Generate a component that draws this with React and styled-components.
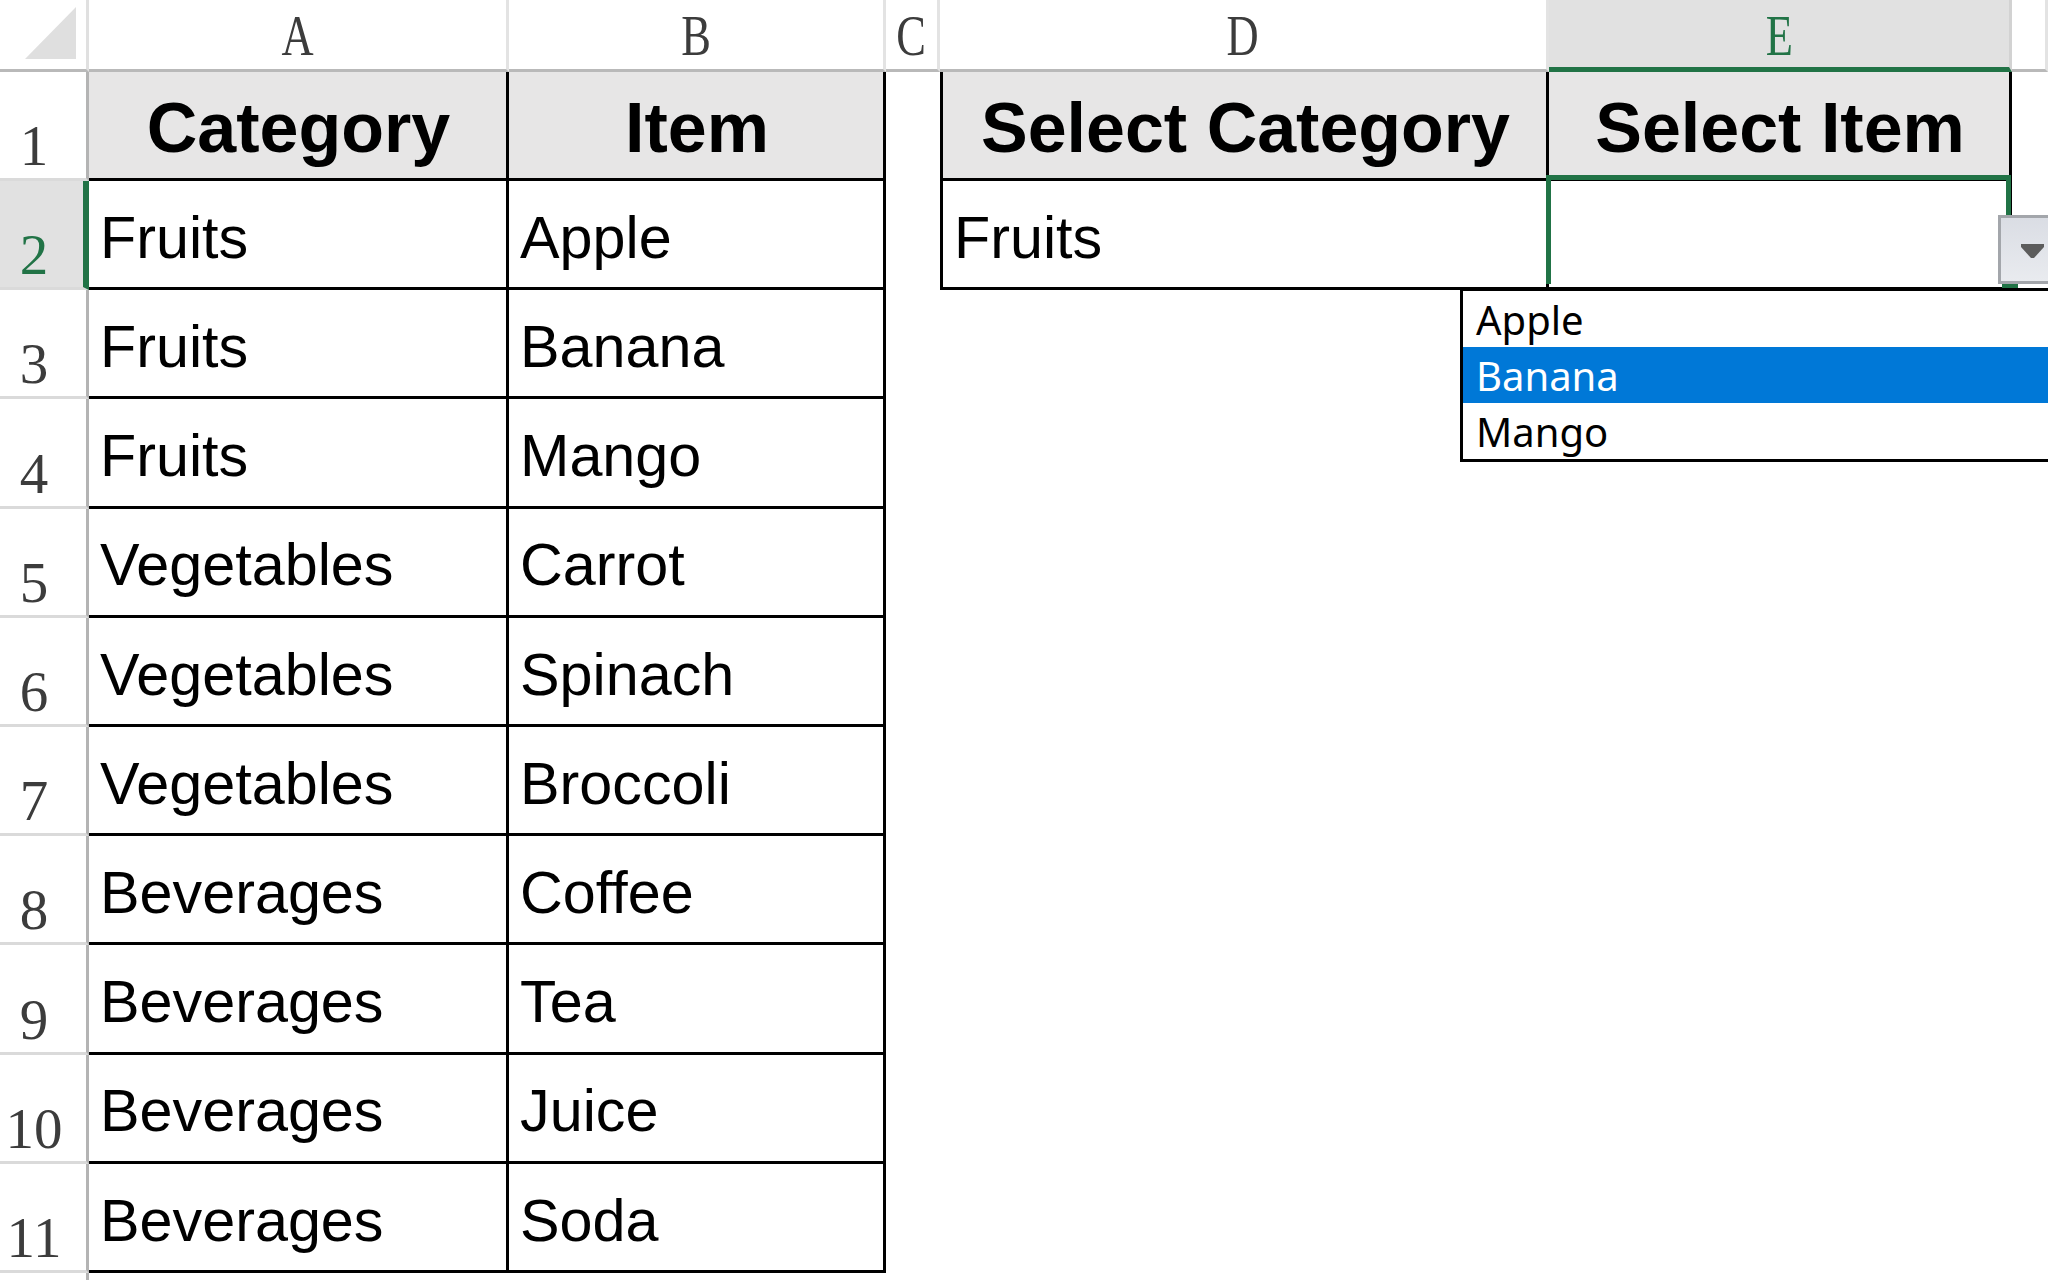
import styled, { createGlobalStyle } from 'styled-components';

const GlobalStyle = createGlobalStyle`
  html, body {
    margin: 0;
    padding: 0;
    background: #fff;
  }
  body {
    overflow: hidden;
  }
`;

const Sheet = styled.div`
  display: grid;
  grid-template-columns: 89px 420px 377px 54px 609px 463px 1fr;
  grid-template-rows: 72px 109px repeat(10, 109.2px) 1fr;
  width: 2048px;
  height: 1280px;
  overflow: hidden;
  background: #fff;
`;

const Corner = styled.div`
  display: flex;
  align-items: flex-end;
  justify-content: flex-end;
  padding: 0 10px 10px 0;
  box-sizing: border-box;
  border-right: 3px solid #e0e0e0;
  border-bottom: 3px solid #b9b9b9;
`;

const CornerMark = styled.div`
  width: 51px;
  height: 52px;
  background: #dfdfdf;
  clip-path: polygon(100% 0, 100% 100%, 0 100%);
`;

const ColHeader = styled.div`
  display: flex;
  align-items: flex-end;
  justify-content: center;
  box-sizing: border-box;
  padding-bottom: ${({ $active }) => ($active ? '3px' : '5px')};
  background: ${({ $active }) => ($active ? '#e1e1e1' : '#fff')};
  border-right: 3px solid ${({ $active }) => ($active ? '#d2d2d2' : '#e3e3e3')};
  border-bottom: ${({ $active }) => ($active ? '5px solid #217346' : '3px solid #b9b9b9')};
  font-family: "Liberation Serif", "Times New Roman", serif;
  font-size: 57px;
  line-height: 1;
  color: ${({ $active }) => ($active ? '#217346' : '#3c3c3c')};
`;

const Letter = styled.span`
  display: inline-block;
  transform: scaleX(0.78);
`;

const RowHeader = styled.div`
  display: flex;
  align-items: flex-end;
  justify-content: center;
  box-sizing: border-box;
  padding: 0 ${({ $active }) => ($active ? '15px' : '18px')} 4px 0;
  background: ${({ $active }) => ($active ? '#e1e1e1' : '#fff')};
  border-right: ${({ $active }) => ($active ? '6px solid #217346' : '3px solid #b4b4b4')};
  border-bottom: ${({ $last }) => ($last ? '0' : '3px solid #dadada')};
  font-family: "Liberation Serif", "Times New Roman", serif;
  font-size: 57px;
  line-height: 1;
  color: ${({ $active }) => ($active ? '#217346' : '#3c3c3c')};
`;

const Cell = styled.div`
  position: relative;
  display: flex;
  align-items: flex-end;
  justify-content: ${({ $head }) => ($head ? 'center' : 'flex-start')};
  box-sizing: border-box;
  padding: 0 9px ${({ $head }) => ($head ? '15px' : '20px')} 11px;
  background: ${({ $head }) => ($head ? '#e7e6e6' : '#fff')};
  border-right: 3px solid #000;
  border-bottom: 3px solid #000;
  border-left: ${({ $edge }) => ($edge ? '3px solid #000' : '0')};
  font-family: "Liberation Sans", Arial, sans-serif;
  font-size: ${({ $head }) => ($head ? '70px' : '59.3px')};
  font-weight: ${({ $head }) => ($head ? 700 : 400)};
  line-height: 1;
  color: #000;
  white-space: nowrap;
`;

const Blank = styled.div`
  background: #fff;
`;

const SelectFrame = styled.div`
  position: absolute;
  top: -6px;
  left: -3px;
  right: -2px;
  bottom: 3px;
  border: 5px solid #217346;
  border-bottom: 0;
  z-index: 1;
  pointer-events: none;
`;

const FillHandle = styled.div`
  position: absolute;
  left: 453px;
  top: 103px;
  width: 16px;
  height: 6px;
  background: #217346;
  z-index: 1;
`;

const DropButton = styled.div`
  position: absolute;
  left: 449px;
  top: 34px;
  width: 69px;
  height: 69px;
  box-sizing: border-box;
  display: flex;
  align-items: center;
  justify-content: center;
  padding-top: 3px;
  border: 3px solid #a3a6ab;
  background: linear-gradient(#dadde4, #e9ebef);
  z-index: 2;
`;

const ListBox = styled.div`
  position: absolute;
  left: -89px;
  top: 107px;
  width: 700px;
  border: 3px solid #000;
  background: #fff;
  z-index: 3;
`;

const ListItem = styled.div`
  height: 56px;
  padding-left: 13px;
  font-family: "Noto Sans", "Open Sans", sans-serif;
  font-size: 40px;
  line-height: 58px;
  overflow: hidden;
  background: ${({ $selected }) => ($selected ? '#0078d7' : '#fff')};
  color: ${({ $selected }) => ($selected ? '#fff' : '#000')};
`;

const columns = ['A', 'B', 'C', 'D', 'E'];

const rows = [
  ['Category', 'Item'],
  ['Fruits', 'Apple'],
  ['Fruits', 'Banana'],
  ['Fruits', 'Mango'],
  ['Vegetables', 'Carrot'],
  ['Vegetables', 'Spinach'],
  ['Vegetables', 'Broccoli'],
  ['Beverages', 'Coffee'],
  ['Beverages', 'Tea'],
  ['Beverages', 'Juice'],
  ['Beverages', 'Soda'],
];

const options = ['Apple', 'Banana', 'Mango'];

const ArrowIcon = () => (
  <svg width="23" height="15" viewBox="0 0 23 15">
    <polygon points="0,0 23,0 23,3 13,14 10,14 0,3" fill="#5c5c5c" />
  </svg>
);

const PickerCell = () => (
  <Cell>
    <SelectFrame />
    <FillHandle />
    <DropButton>
      <ArrowIcon />
    </DropButton>
    <ListBox>
      {options.map((option) => (
        <ListItem key={option} $selected={option === 'Banana'}>
          {option}
        </ListItem>
      ))}
    </ListBox>
  </Cell>
);

const LookupCells = ({ index }) => {
  if (index === 0) {
    return (
      <>
        <Cell $head $edge>Select Category</Cell>
        <Cell $head>Select Item</Cell>
      </>
    );
  }
  if (index === 1) {
    return (
      <>
        <Cell $edge>Fruits</Cell>
        <PickerCell />
      </>
    );
  }
  return (
    <>
      <Blank />
      <Blank />
    </>
  );
};

export default function App() {
  return (
    <>
      <GlobalStyle />
      <Sheet>
        <Corner>
          <CornerMark />
        </Corner>
        {columns.map((col) => (
          <ColHeader key={col} $active={col === 'E'}>
            <Letter>{col}</Letter>
          </ColHeader>
        ))}
        <ColHeader />

        {rows.map((row, index) => (
          <div key={index} style={{ display: 'contents' }}>
            <RowHeader $active={index === 1}>{index + 1}</RowHeader>
            <Cell $head={index === 0}>{row[0]}</Cell>
            <Cell $head={index === 0}>{row[1]}</Cell>
            <Blank />
            <LookupCells index={index} />
            <Blank />
          </div>
        ))}

        <RowHeader $last />
        {[0, 1, 2, 3, 4, 5].map((n) => (
          <Blank key={n} />
        ))}
      </Sheet>
    </>
  );
}
